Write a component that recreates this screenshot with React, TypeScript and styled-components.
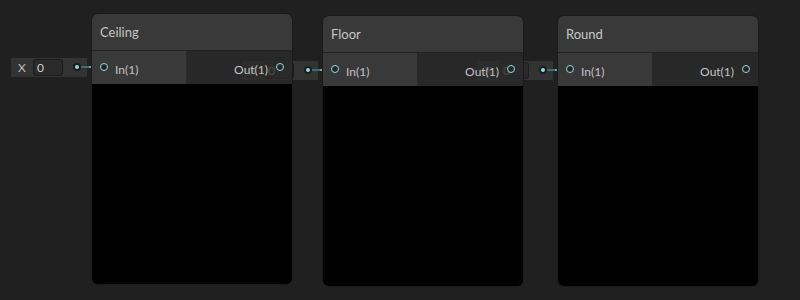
import styled, { createGlobalStyle } from 'styled-components';

interface INode {
  id: number;
  title: string;
  x: number;
  y: number;
}

interface IField {
  id: number;
  x: number;
  y: number;
}

const nodes: INode[] = [
  { id: 1, title: 'Ceiling', x: 92, y: 14 },
  { id: 2, title: 'Floor', x: 323, y: 16 },
  { id: 3, title: 'Round', x: 558, y: 16 }
];

// default value fields hanging off the In(1) ports
const fields: IField[] = [
  { id: 1, x: 11, y: 58 },
  { id: 2, x: 242, y: 61 },
  { id: 3, x: 477, y: 61 }
];

const GlobalStyle = createGlobalStyle`
  html, body {
    margin: 0;
    padding: 0;
    background: #202020;
  }
  body {
    font-family: 'Lato', 'Open Sans', sans-serif;
  }
`;

export default function App() {
  return (
    <>
      <GlobalStyle />
      <Canvas>
        {fields.map((f) => (
          <Field key={f.id} $x={f.x} $y={f.y}>
            <FieldLabel>X</FieldLabel>
            <FieldInput>0</FieldInput>
            <Wire>
              <WireDot />
              <WireLine />
            </Wire>
          </Field>
        ))}
        {nodes.map((n) => (
          <Node key={n.id} $x={n.x} $y={n.y}>
            <Title>{n.title}</Title>
            <PortRow>
              <InSide>
                <Port />
                <PortLabel>In(1)</PortLabel>
              </InSide>
              <OutSide>
                <PortLabel>Out(1)</PortLabel>
                <Port />
              </OutSide>
            </PortRow>
            <Preview />
          </Node>
        ))}
      </Canvas>
    </>
  );
}

const Canvas = styled.div`
  position: relative;
  width: 800px;
  height: 300px;
  overflow: hidden;
  background: #202020;
`;

const Node = styled.div<{ $x: number; $y: number }>`
  position: absolute;
  left: ${(p) => p.$x}px;
  top: ${(p) => p.$y}px;
  z-index: 2;
  width: 200px;
  display: flex;
  flex-direction: column;
  border-radius: 6px;
  overflow: hidden;
  box-shadow: 0 0 0 1px #1b1b1b;
`;

const Title = styled.div`
  height: 36px;
  display: flex;
  align-items: center;
  padding: 0 8px;
  background: #393939;
  border-bottom: 1px solid #232323;
  color: #c6c6c6;
  font-size: 13px;
`;

const PortRow = styled.div`
  height: 33px;
  display: flex;
`;

const InSide = styled.div`
  box-sizing: border-box;
  width: 95px;
  display: flex;
  align-items: center;
  gap: 7px;
  padding-left: 8px;
  background: #393939;
  border-right: 1px solid #2a2a2a;
`;

const OutSide = styled.div`
  flex: 1;
  display: flex;
  align-items: center;
  justify-content: flex-end;
  gap: 8px;
  padding-right: 8px;
  background: rgba(42, 42, 42, 0.8);
`;

const PortLabel = styled.span`
  color: #c2c2c2;
  font-size: 12px;
  padding-top: 3px;
`;

const Port = styled.span`
  width: 6px;
  height: 6px;
  border-radius: 50%;
  border: 1.5px solid #8fdde3;
  background: #262626;
  margin-top: -1px;
`;

const Preview = styled.div`
  height: 200px;
  background: #000;
`;

const Field = styled.div<{ $x: number; $y: number }>`
  position: absolute;
  left: ${(p) => p.$x}px;
  top: ${(p) => p.$y}px;
  z-index: 1;
  width: 76px;
  height: 19px;
  display: flex;
  align-items: center;
  background: #333333;
`;

const FieldLabel = styled.span`
  width: 22px;
  text-align: center;
  color: #bcbcbc;
  font-size: 12px;
`;

const FieldInput = styled.span`
  width: 30px;
  height: 17px;
  box-sizing: border-box;
  border: 1px solid #1c1c1c;
  border-radius: 3px;
  background: #2a2a2a;
  color: #d0d0d0;
  font-size: 12px;
  line-height: 15px;
  padding-left: 3px;
`;

const Wire = styled.div`
  position: absolute;
  left: 62px;
  top: 5px;
  width: 28px;
  height: 8px;
  display: flex;
  align-items: center;
`;

const WireDot = styled.span`
  width: 4px;
  height: 4px;
  border-radius: 50%;
  background: #8fdde3;
  border: 2px solid #1c1c1c;
`;

const WireLine = styled.span`
  flex: 1;
  height: 2px;
  background: linear-gradient(90deg, #3f6e70 0 40%, #6aa8ac 40%);
`;
